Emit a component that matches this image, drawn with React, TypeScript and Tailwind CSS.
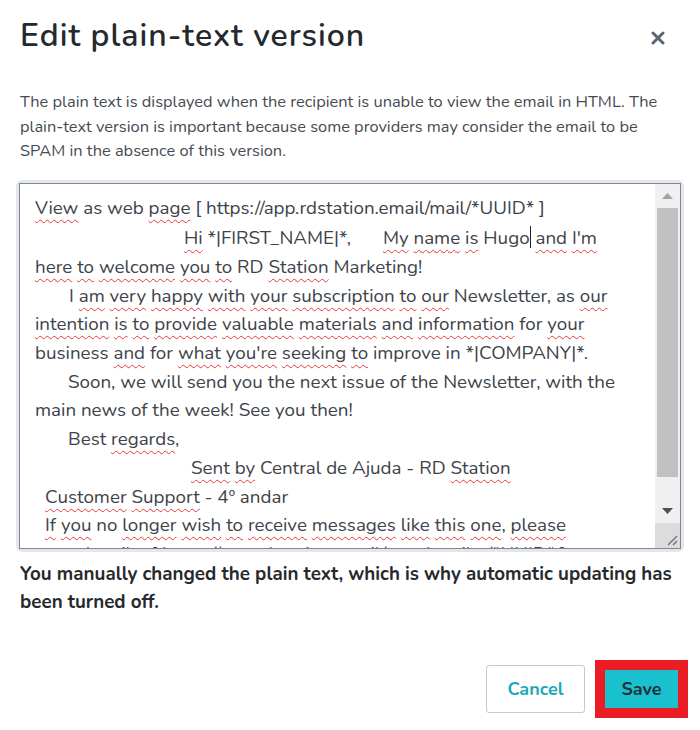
import React from 'react';

const font = { fontFamily: '"Nunito", "Lato", "Open Sans", sans-serif' };

// palavra com sublinhado de corretor ortográfico
const W = ({ children }: { children: React.ReactNode }) => (
    <span className="underline decoration-wavy decoration-[#e5383b] decoration-1 underline-offset-[5px] [text-decoration-skip-ink:none]">
        {children}
    </span>
);

const ScrollBar = () => (
    <div className="flex w-[25px] shrink-0 flex-col bg-[#f0f0f0]">
        <div className="flex h-[24px] items-center justify-center">
            <svg width="11" height="6" viewBox="0 0 11 6">
                <path d="M0 6 L5.5 0 L11 6 Z" fill="#a3a3a3" />
            </svg>
        </div>
        <div className="mx-[2px] h-[269px] bg-[#c1c1c1]" />
        <div className="flex-1" />
        <div className="flex h-[24px] items-center justify-center">
            <svg width="11" height="6" viewBox="0 0 11 6">
                <path d="M0 0 L5.5 6 L11 0 Z" fill="#505050" />
            </svg>
        </div>
        <div className="flex h-[25px] items-end justify-end bg-[#dcdcdc] p-[2px]">
            <svg width="12" height="12" viewBox="0 0 12 12">
                <path d="M11 2 L2 11 M11 7 L7 11" stroke="#6b6b6b" strokeWidth="1.2" />
            </svg>
        </div>
    </div>
);

export default function App() {
    return (
        <div className="flex h-[730px] w-[700px] flex-col bg-white px-5" style={font}>
            {/** Cabeçalho */}
            <div className="flex items-center justify-between pt-[14px]">
                <h1 className="text-[32px] font-semibold leading-[44px] tracking-[1px] text-[#24292e]">
                    Edit plain-text version
                </h1>
                <svg width="14" height="14" viewBox="0 0 14 14" className="mr-[15px] mt-[4px]">
                    <path d="M2 2 L12 12 M12 2 L2 12" stroke="#5b6670" strokeWidth="3" strokeLinecap="round" />
                </svg>
            </div>

            <p className="mt-[32px] whitespace-nowrap text-[16.4px] leading-[24.5px] text-[#454b52]">
                The plain text is displayed when the recipient is unable to view the email in HTML. The
                <br />
                plain-text version is important because some providers may consider the email to be
                <br />
                SPAM in the absence of this version.
            </p>

            {/** Área de texto */}
            <div className="-mx-[4px] mt-[16px] rounded-[6px] bg-[#e3e7eb] p-[3px]">
                <div className="flex h-[366px] overflow-hidden border border-[#7d8894] bg-white">
                    <div className="flex-1 overflow-hidden whitespace-pre pl-[15px] pt-[10px] text-[18.8px] leading-[28.7px] text-[#3d434a]">
                        <div>
                            <W>View</W> as web <W>page</W> [ https://app.rdstation.email/mail/*UUID* ]
                        </div>
                        <div className="pl-[149px]">
                            <W>Hi</W> *|FIRST_NAME|*,<span className="inline-block w-[32px]" />
                            <W>My</W> <W>name</W> <W>is</W> Hugo
                            <span className="inline-block h-[22px] w-px translate-y-[4px] bg-[#222]" />{' '}
                            <W>and</W> <W>I'm</W>
                        </div>
                        <div>
                            <W>here</W> <W>to</W> <W>welcome</W> <W>you</W> <W>to</W> RD <W>Station</W> Marketing!
                        </div>
                        <div className="pl-[34px]">
                            I <W>am</W> <W>very</W> <W>happy</W> <W>with</W> <W>your</W> <W>subscription</W>{' '}
                            <W>to</W> <W>our</W> Newsletter, as <W>our</W>
                        </div>
                        <div>
                            <W>intention</W> <W>is</W> <W>to</W> <W>provide</W> <W>valuable</W> <W>materials</W>{' '}
                            <W>and</W> <W>information</W> for <W>your</W>
                        </div>
                        <div>
                            business <W>and</W> for <W>what</W> <W>you're</W> <W>seeking</W> <W>to</W> improve in
                            *|COMPANY|*.
                        </div>
                        <div className="pl-[33px]">
                            Soon, we will send you the next issue of the Newsletter, with the
                        </div>
                        <div>main news of the week! See you then!</div>
                        <div className="pl-[33px]">
                            Best <W>regards</W>,
                        </div>
                        <div className="pl-[156px]">
                            <W>Sent</W> <W>by</W> Central de Ajuda - RD <W>Station</W>
                        </div>
                        <div className="pl-[10px]">
                            <W>Customer</W> <W>Support</W> - 4º andar
                        </div>
                        <div className="pl-[10px]">
                            <W>If</W> <W>you</W> no <W>longer</W> <W>wish</W> <W>to</W> <W>receive</W>{' '}
                            <W>messages</W> <W>like</W> <W>this</W> <W>one</W>, <W>please</W>
                        </div>
                        <div className="pl-[10px]">
                            unsubscribe [ https://app.rdstation.email/unsubscribe/*UUID* ]
                        </div>
                    </div>
                    <ScrollBar />
                </div>
            </div>

            <p className="mt-[8px] whitespace-nowrap text-[18.8px] font-bold leading-[28px] text-[#26292d]">
                You manually changed the plain text, which is why automatic updating has
                <br />
                been turned off.
            </p>

            {/** Botões */}
            <div className="mt-auto mb-[12px] flex items-center justify-end gap-[10px]">
                <button className="h-[48px] w-[99px] rounded-[3px] border border-[#c3cad1] bg-white text-[18px] font-bold text-[#1aa9b8]">
                    Cancel
                </button>
                <div className="-mr-[8px] border-[10px] border-[#ec1c24]">
                    <button className="block h-[38px] w-[73px] bg-[#19c1cf] text-[18px] font-bold text-[#22313a]">
                        Save
                    </button>
                </div>
            </div>
        </div>
    );
}
